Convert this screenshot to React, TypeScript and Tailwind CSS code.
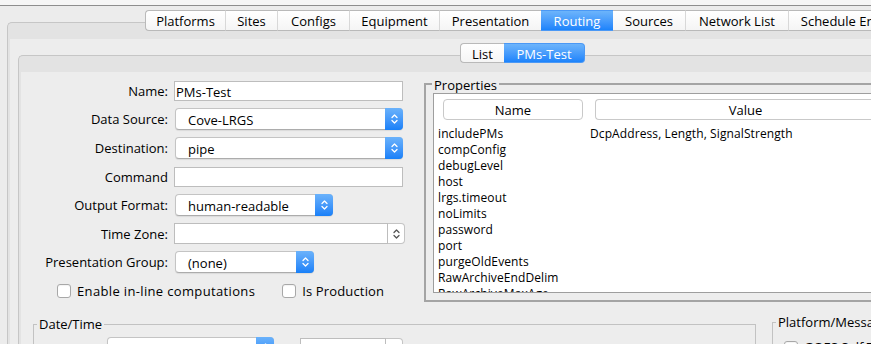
import React from "react";

const Chevrons = ({ color }: { color: string }) => (
  <svg width="9" height="14" viewBox="0 0 9 14" fill="none" stroke={color} strokeWidth="1.3" strokeLinecap="round" strokeLinejoin="round">
    <path d="M2 5.5 4.5 3 7 5.5" />
    <path d="M2 8.5 4.5 11 7 8.5" />
  </svg>
);

function PopSelect({ className, text }: { className: string; text: string }) {
  return (
    <div className={`flex h-[22px] items-stretch rounded-[4px] border border-[#c4c4c4] border-b-[#acacac] bg-white shadow-[0_1px_1px_rgba(0,0,0,0.08)] ${className}`}>
      <div className="flex-1 pl-[12px] pt-px leading-[20px] text-black">{text}</div>
      <div className="-my-px -mr-px flex w-[18px] items-center justify-center rounded-r-[4px] bg-linear-to-b from-[#6ab2fb] to-[#1780f8]">
        <Chevrons color="#ffffff" />
      </div>
    </div>
  );
}

function ComboField({ className, text }: { className: string; text: string }) {
  return (
    <div className={`flex h-[21px] items-stretch ${className}`}>
      <div className="flex-1 border border-[#bdbdbd] bg-white pl-[4px] leading-[19px]">{text}</div>
      <div className="flex w-[17px] items-center justify-center rounded-r-[4px] border border-l-0 border-[#c4c4c4] bg-white">
        <Chevrons color="#555555" />
      </div>
    </div>
  );
}

function TextField({ className, text }: { className: string; text: string }) {
  return <div className={`h-[20px] border border-[#bdbdbd] bg-white pl-[1px] pt-px leading-[18px] text-black ${className}`}>{text}</div>;
}

function Checkbox() {
  return <div className="h-[14px] w-[14px] shrink-0 rounded-[3px] border border-[#a8a8a8] bg-white shadow-[inset_0_1px_1px_rgba(0,0,0,0.05)]" />;
}

const outerTabs: { label: string; w: string; sel?: boolean }[] = [
  { label: "Platforms", w: "w-[80px]" },
  { label: "Sites", w: "w-[52px]" },
  { label: "Configs", w: "w-[72px]" },
  { label: "Equipment", w: "w-[90px]" },
  { label: "Presentation", w: "w-[102px]" },
  { label: "Routing", w: "w-[72px]", sel: true },
  { label: "Sources", w: "w-[72px]" },
  { label: "Network List", w: "w-[103px]" },
  { label: "Schedule Entries", w: "w-[125px]" },
];

const props = [
  ["includePMs", "DcpAddress, Length, SignalStrength"],
  ["compConfig", ""],
  ["debugLevel", ""],
  ["host", ""],
  ["lrgs.timeout", ""],
  ["noLimits", ""],
  ["password", ""],
  ["port", ""],
  ["purgeOldEvents", ""],
  ["RawArchiveEndDelim", ""],
  ["RawArchiveMaxAge", ""],
];

function Row({ label, h, children }: { label: string; h: string; children: React.ReactNode }) {
  return (
    <div className={`flex items-center ${h}`}>
      <div className="w-[147px] pt-[2px] text-right text-black">{label}</div>
      <div className="ml-[6px] flex items-center">{children}</div>
    </div>
  );
}

export default function App() {
  return (
    <div className="h-[344px] w-[871px] overflow-hidden bg-[#ececec] font-['Open_Sans',sans-serif] text-[13px] text-black">
      <div className="h-[6px] border-b border-[#8e8e8e] bg-[#f6f6f6]" />
      <div className="pl-[7px] pt-[4px]">
        {/* outer tabs */}
        <div className="relative z-10 ml-[138px] flex h-[21px] w-max">
          {outerTabs.map((t, i) => (
            <div
              key={t.label}
              className={`flex shrink-0 items-center justify-center whitespace-nowrap border-y pt-px leading-[19px] ${t.w} ${
                t.sel
                  ? "border-[#4a98f5] bg-linear-to-b from-[#6cb4fb] to-[#1b83fb] text-white"
                  : "border-[#b9b9b9] bg-linear-to-b from-white to-[#f5f5f5] text-black"
              } ${i === 0 ? "rounded-l-[4px] border-l border-l-[#b9b9b9]" : ""} ${
                i > 0 && !t.sel && !outerTabs[i - 1].sel ? "border-l border-l-[#d8d8d8]" : ""
              }`}
            >
              {t.label}
            </div>
          ))}
        </div>
        {/* outer pane */}
        <div className="-mt-[9px] rounded-tl-[5px] border-l border-t border-[#c6c6c6] bg-[#e3e3e3] pl-[2px] pt-[16px]">
          <div className="bg-[#ededed] pl-[8px] pt-[4px]">
            {/* inner tabs */}
            <div className="relative z-10 ml-[442px] flex h-[20px]">
              <div className="flex w-[44px] items-center justify-center rounded-l-[4px] border border-r-0 border-[#b9b9b9] bg-linear-to-b from-white to-[#f5f5f5] pt-px leading-[18px]">
                List
              </div>
              <div className="flex w-[81px] items-center justify-center rounded-r-[4px] border border-l-0 border-[#4a98f5] bg-linear-to-b from-[#6cb4fb] to-[#1b83fb] pt-px leading-[18px] text-white">
                PMs-Test
              </div>
            </div>
            {/* inner pane */}
            <div className="-mt-[8px] rounded-tl-[5px] border-l border-t border-[#c6c6c6] bg-[#e3e3e3] pl-[2px] pt-[16px]">
              <div className="h-[300px] bg-[#ededed]">
                <div className="flex">
                  {/* form */}
                  <div className="w-[403px] shrink-0 pt-[5px]">
                    <Row label="Name:" h="h-[28px]">
                      <TextField className="w-[229px]" text="PMs-Test" />
                    </Row>
                    <Row label="Data Source:" h="h-[28px]">
                      <PopSelect className="ml-[1px] w-[228px]" text="Cove-LRGS" />
                    </Row>
                    <Row label="Destination:" h="h-[29px]">
                      <PopSelect className="ml-[1px] w-[228px]" text="pipe" />
                    </Row>
                    <Row label="Command" h="h-[29px]">
                      <TextField className="w-[229px]" text="" />
                    </Row>
                    <Row label="Output Format:" h="h-[28px]">
                      <PopSelect className="ml-[1px] w-[158px]" text="human-readable" />
                    </Row>
                    <Row label="Time Zone:" h="h-[29px]">
                      <ComboField className="w-[231px]" text="" />
                    </Row>
                    <Row label="Presentation Group:" h="h-[28px]">
                      <PopSelect className="ml-[1px] w-[139px]" text="(none)" />
                    </Row>
                    <div className="flex h-[30px] items-center pl-[36px]">
                      <Checkbox />
                      <span className="ml-[6px] pt-[2px] tracking-[0.35px]">Enable in-line computations</span>
                      <div className="ml-[27px]">
                        <Checkbox />
                      </div>
                      <span className="ml-[6px] pt-[2px] tracking-[0.15px]">Is Production</span>
                    </div>
                  </div>
                  {/* properties */}
                  <div className="relative mt-[11px] h-[219px] flex-1 border-2 border-r-0 border-[#a4a4a4] pl-[7px] pt-[8px]">
                    <span className="absolute -top-[8px] left-[6px] bg-[#ededed] px-[2px] leading-[16px]">Properties</span>
                    <div className="h-[200px] overflow-hidden border border-r-0 border-[#9e9e9e] bg-white">
                      <div className="flex h-[32px] pl-[9px] pt-[5px]">
                        <div className="flex h-[21px] w-[140px] items-center justify-center rounded-[4px] border border-[#c9c9c9] bg-white pt-[2px]">Name</div>
                        <div className="ml-[12px] flex h-[21px] w-[300px] items-center justify-center rounded-l-[4px] border border-r-0 border-[#c9c9c9] bg-white pt-[2px]">
                          Value
                        </div>
                      </div>
                      {props.map(([n, v]) => (
                        <div key={n} className="flex h-[16px] pl-[4px] text-[12px] leading-[16px] tracking-[0.1px]">
                          <div className="w-[152px] whitespace-nowrap">{n}</div>
                          <div className="whitespace-nowrap">{v}</div>
                        </div>
                      ))}
                    </div>
                  </div>
                </div>
                {/* bottom */}
                <div className="flex h-[60px] items-start">
                  <div className="relative ml-[12px] mt-[18px] h-[50px] w-[723px] shrink-0 border border-[#c2c2c2] pt-[12px]">
                    <span className="absolute -top-[9px] left-[3px] bg-[#ededed] px-[2px] leading-[16px]">Date/Time</span>
                    <div className="flex items-start">
                      <PopSelect className="ml-[73px] w-[167px]" text="now - 1 day" />
                      <ComboField className="ml-[26px] mt-[1px] w-[103px]" text="" />
                    </div>
                  </div>
                  <div className="ml-[7px] mt-[-6px] h-[70px] w-px bg-[#d2d2d2]" />
                  <div className="relative ml-[9px] mt-[16px] h-[50px] flex-1 border border-r-0 border-[#c2c2c2] pl-[11px] pt-[15px]">
                    <span className="absolute -top-[9px] left-[3px] whitespace-nowrap bg-[#ededed] px-[2px] leading-[16px]">Platform/Message Types</span>
                    <div className="flex items-center">
                      <Checkbox />
                      <span className="ml-[6px] whitespace-nowrap">GOES Self Timed</span>
                    </div>
                  </div>
                </div>
              </div>
            </div>
          </div>
        </div>
      </div>
    </div>
  );
}
